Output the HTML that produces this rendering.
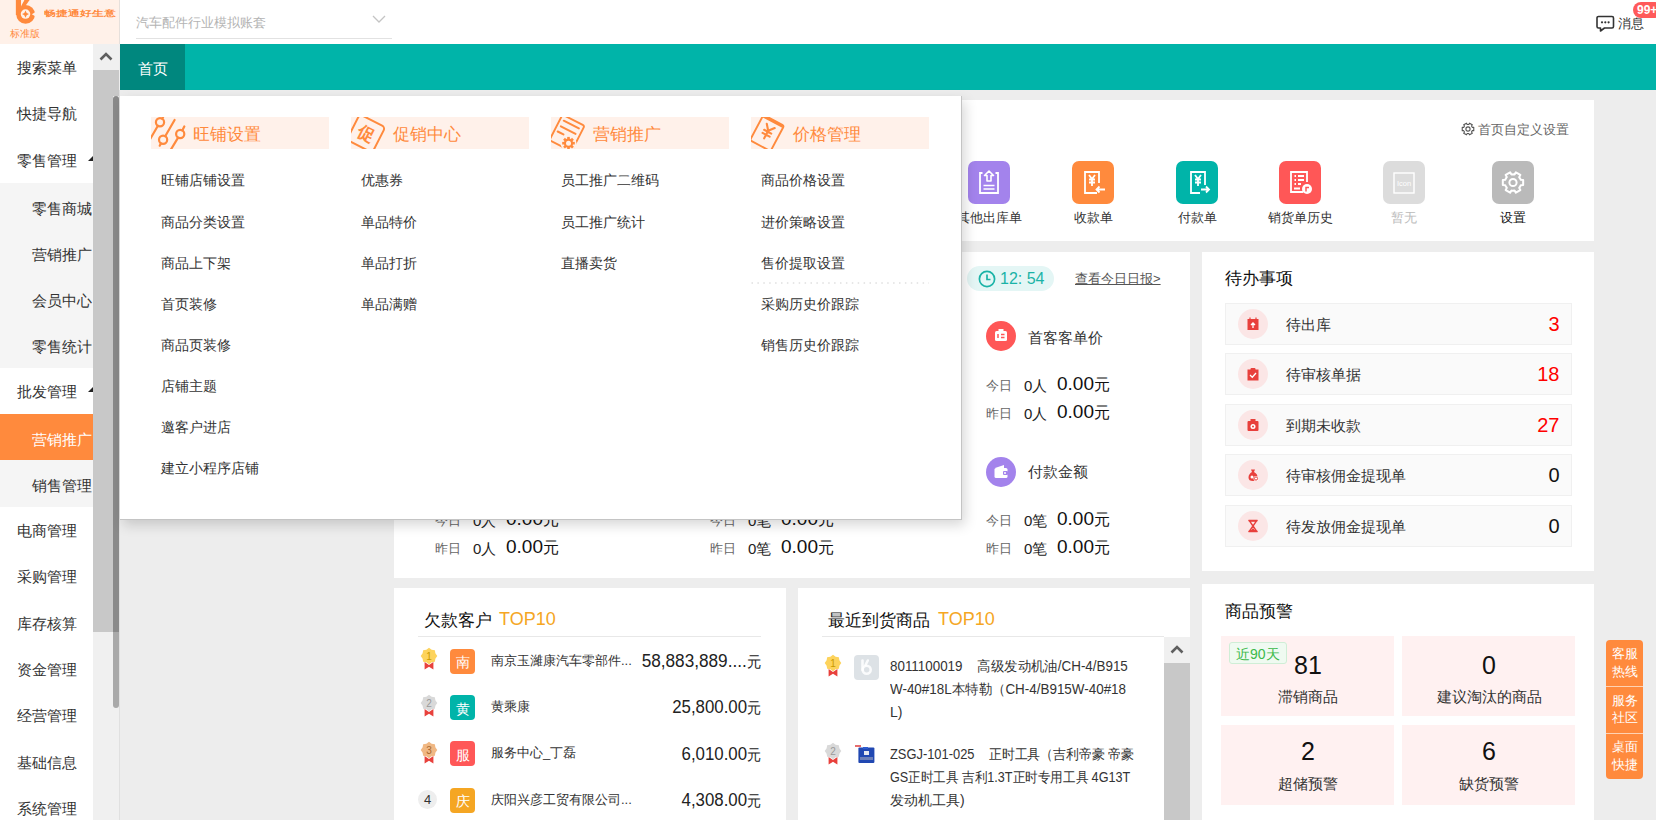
<!DOCTYPE html><html><head><meta charset="utf-8"><style>
*{box-sizing:border-box;margin:0;padding:0}
html,body{width:1656px;height:820px;overflow:hidden;background:#ededed;font-family:"Liberation Sans",sans-serif;color:#333}
.a{position:absolute;white-space:nowrap}
.card{position:absolute;background:#fff}
</style></head><body>
<div class="a" style="left:0px;top:0px;width:119px;height:44px;background:#fff1e9;"></div>
<div class="a" style="left:119px;top:0px;width:1px;height:44px;background:#e6e0dc;"></div>
<div class="a" style="left:120px;top:0px;width:1536px;height:44px;background:#fff;"></div>
<svg class="a" style="left:10px;top:0px" width="30" height="26" viewBox="0 0 30 26">
<rect x="5.85" y="0" width="5.2" height="15" fill="#ff8a3d"/>
<circle cx="15.6" cy="14.3" r="9.4" fill="#ff8a3d"/>
<path d="M14.3 0 H19.6 L15 6.5 L11 6.5Z" fill="#ff8a3d"/>
<path d="M11.05 0 H14.3 L11.05 4.8Z" fill="#fff1e9"/>
<circle cx="15.5" cy="14.1" r="4.75" fill="#fff1e9"/>
<path d="M25.2 12.3 L21.8 14.3 L25.2 16.3Z" fill="#fff1e9"/>
<path d="M15.5 10.4 Q16.1 13.5 19 14.1 Q16.1 14.7 15.5 17.8 Q14.9 14.7 12 14.1 Q14.9 13.5 15.5 10.4Z" fill="#ff8a3d"/>
</svg>
<div class="a" style="left:44px;top:5px;font-size:12px;line-height:16px;color:#ff8a3d;font-weight:bold;transform:scaleY(0.68);transform-origin:0 50%;">畅捷通好生意</div>
<div class="a" style="left:10px;top:28.4px;font-size:10px;line-height:12px;color:#ff8a3d;">标准版</div>
<div class="a" style="left:136px;top:13.5px;font-size:13px;line-height:18px;color:#b4b4b4;">汽车配件行业模拟账套</div>
<svg class="a" style="left:372px;top:15px" width="14" height="9" viewBox="0 0 14 9"><path d="M1 1 L7 7 L13 1" fill="none" stroke="#c4c4c4" stroke-width="1.3"/></svg>
<div class="a" style="left:136px;top:38px;width:256px;height:1px;background:#e2e2e2;"></div>
<svg class="a" style="left:1596px;top:15px" width="19" height="19" viewBox="0 0 19 19">
<path d="M2.5 1.5 H16 A1.5 1.5 0 0 1 17.5 3 V11.5 A1.5 1.5 0 0 1 16 13 H8.5 L4.5 16 V13 H2.5 A1.5 1.5 0 0 1 1 11.5 V3 A1.5 1.5 0 0 1 2.5 1.5Z" fill="none" stroke="#333" stroke-width="1.6" stroke-linejoin="round"/>
<circle cx="6" cy="7.3" r="1.1" fill="#333"/><circle cx="9.3" cy="7.3" r="1.1" fill="#333"/><circle cx="12.6" cy="7.3" r="1.1" fill="#333"/></svg>
<div class="a" style="left:1618px;top:14.5px;font-size:13px;line-height:18px;color:#333;">消息</div>
<div class="a" style="left:1633px;top:2px;width:30px;height:16px;border-radius:8px;background:#ff5a5a;color:#fff;font-size:12px;font-weight:bold;line-height:16px;padding-left:4px">99+</div>
<div class="a" style="left:120px;top:44px;width:1536px;height:46px;background:#00b4a9;"></div>
<div class="a" style="left:120px;top:44px;width:65px;height:46px;background:#00877e;"></div>
<div class="a" style="left:138px;top:59.1px;font-size:15px;line-height:20px;color:#fff;">首页</div>
<div class="a" style="left:0px;top:44px;width:93px;height:776px;background:#fff;"></div>
<div class="a" style="left:0px;top:183px;width:93px;height:185px;background:#f5f5f5;"></div>
<div class="a" style="left:0px;top:414px;width:93px;height:46px;background:#ff8a3d;"></div>
<div class="a" style="left:0px;top:460px;width:93px;height:47px;background:#f5f5f5;"></div>
<div class="a" style="left:17px;top:58.2px;font-size:15px;line-height:20px;color:#333;">搜索菜单</div>
<div class="a" style="left:17px;top:104.4px;font-size:15px;line-height:20px;color:#333;">快捷导航</div>
<div class="a" style="left:17px;top:150.8px;font-size:15px;line-height:20px;color:#333;">零售管理</div>
<svg class="a" style="left:87px;top:154.8px" width="8" height="7" viewBox="0 0 8 7"><path d="M1 6 L7 6 L7 0Z" fill="#222"/></svg>
<div class="a" style="left:32px;top:198.5px;font-size:15px;line-height:20px;color:#333;">零售商城</div>
<div class="a" style="left:32px;top:244.8px;font-size:15px;line-height:20px;color:#333;">营销推广</div>
<div class="a" style="left:32px;top:291.1px;font-size:15px;line-height:20px;color:#333;">会员中心</div>
<div class="a" style="left:32px;top:337.4px;font-size:15px;line-height:20px;color:#333;">零售统计</div>
<div class="a" style="left:17px;top:382.2px;font-size:15px;line-height:20px;color:#333;">批发管理</div>
<svg class="a" style="left:87px;top:386.2px" width="8" height="7" viewBox="0 0 8 7"><path d="M1 6 L7 6 L7 0Z" fill="#222"/></svg>
<div class="a" style="left:32px;top:430.0px;font-size:15px;line-height:20px;color:#fff;">营销推广</div>
<div class="a" style="left:32px;top:476.3px;font-size:15px;line-height:20px;color:#333;">销售管理</div>
<div class="a" style="left:17px;top:521.1px;font-size:15px;line-height:20px;color:#333;">电商管理</div>
<div class="a" style="left:17px;top:567.4px;font-size:15px;line-height:20px;color:#333;">采购管理</div>
<div class="a" style="left:17px;top:613.7px;font-size:15px;line-height:20px;color:#333;">库存核算</div>
<div class="a" style="left:17px;top:660.0px;font-size:15px;line-height:20px;color:#333;">资金管理</div>
<div class="a" style="left:17px;top:706.3px;font-size:15px;line-height:20px;color:#333;">经营管理</div>
<div class="a" style="left:17px;top:752.6px;font-size:15px;line-height:20px;color:#333;">基础信息</div>
<div class="a" style="left:17px;top:798.9px;font-size:15px;line-height:20px;color:#333;">系统管理</div>
<div class="a" style="left:93px;top:44px;width:26px;height:776px;background:#f0f0f0;"></div>
<div class="a" style="left:93px;top:70px;width:20px;height:562px;background:#c8c8c8;"></div>
<div class="a" style="left:113px;top:70px;width:6px;height:26px;background:#c8c8c8;"></div>
<svg class="a" style="left:99px;top:51px" width="14" height="10" viewBox="0 0 14 10"><path d="M1.5 8.5 L7 3 L12.5 8.5" fill="none" stroke="#5f5f5f" stroke-width="2.6"/></svg>
<div class="a" style="left:113px;top:96px;width:6px;height:612px;border-radius:3px;background:linear-gradient(#8a8a8a 0,#8a8a8a 536px,#a9a9a9 536px)"></div>
<div class="a" style="left:119px;top:90px;width:1px;height:730px;background:#e0e0e0;"></div>
<div class="a" style="left:394px;top:100px;width:1200px;height:141px;background:#fff;"></div>
<div class="a" style="left:1478px;top:121.0px;font-size:13px;line-height:18px;color:#666;">首页自定义设置</div>
<svg class="a" style="left:1460.5px;top:122px" width="14" height="14" viewBox="0 0 14 14"><path d="M11.23 5.19 L11.31 5.40 L12.77 5.37 L12.77 8.63 L11.31 8.60 L10.68 9.76 L10.54 9.94 L11.30 11.19 L8.48 12.82 L7.77 11.53 L6.45 11.57 L6.23 11.53 L5.52 12.82 L2.70 11.19 L3.46 9.94 L2.77 8.81 L2.69 8.60 L1.23 8.63 L1.23 5.37 L2.69 5.40 L3.32 4.24 L3.46 4.06 L2.70 2.81 L5.52 1.18 L6.23 2.47 L7.55 2.43 L7.77 2.47 L8.48 1.18 L11.30 2.81 L10.54 4.06Z" fill="none" stroke="#555" stroke-width="1.1" stroke-linejoin="round"/><circle cx="7" cy="7" r="2.1" fill="none" stroke="#555" stroke-width="1.1"/></svg>
<div class="a" style="left:968px;top:161px;width:42px;height:43px;border-radius:7px;background:#a383ec"></div>
<div class="a" style="left:889.0px;width:200px;text-align:center;top:209.3px;font-size:13px;line-height:18px;color:#333;">其他出库单</div>
<div class="a" style="left:1072px;top:161px;width:42px;height:43px;border-radius:7px;background:#ff8a3d"></div>
<div class="a" style="left:993.0px;width:200px;text-align:center;top:209.3px;font-size:13px;line-height:18px;color:#333;">收款单</div>
<div class="a" style="left:1176px;top:161px;width:42px;height:43px;border-radius:7px;background:#00b4a9"></div>
<div class="a" style="left:1097.0px;width:200px;text-align:center;top:209.3px;font-size:13px;line-height:18px;color:#333;">付款单</div>
<div class="a" style="left:1279px;top:161px;width:42px;height:43px;border-radius:7px;background:#ff5757"></div>
<div class="a" style="left:1200.0px;width:200px;text-align:center;top:209.3px;font-size:13px;line-height:18px;color:#333;">销货单历史</div>
<div class="a" style="left:1383px;top:161px;width:42px;height:43px;border-radius:7px;background:#dcdcdc"></div>
<div class="a" style="left:1304.0px;width:200px;text-align:center;top:209.3px;font-size:13px;line-height:18px;color:#bbb;">暂无</div>
<div class="a" style="left:1492px;top:161px;width:42px;height:43px;border-radius:7px;background:#bababa"></div>
<div class="a" style="left:1413.0px;width:200px;text-align:center;top:209.3px;font-size:13px;line-height:18px;color:#111;">设置</div>
<svg class="a" style="left:968px;top:161px" width="42" height="43" viewBox="0 0 42 43"><path d="M14.5 12 H12 V32 H30 V12 H27.5" fill="none" stroke="#fff" stroke-width="1.8"/><path d="M21 10 L16.5 14.5 H19 V20 H23 V14.5 H25.5Z" fill="none" stroke="#fff" stroke-width="1.6" stroke-linejoin="round"/><path d="M15.5 24.5 H26.5 M15.5 28 H26.5" stroke="#fff" stroke-width="1.6"/></svg>
<svg class="a" style="left:1072px;top:161px" width="42" height="43" viewBox="0 0 42 43"><path d="M27 22 V11 H13 V32 H25" fill="none" stroke="#fff" stroke-width="1.8"/><path d="M17 14 L20 18 L23 14 M17 18.5 H23 M17 21.5 H23 M20 18 V25" fill="none" stroke="#fff" stroke-width="1.8"/><path d="M33 28.5 H24.5 M27.5 25.5 L24.5 28.5 L27.5 31.5" fill="none" stroke="#fff" stroke-width="1.8"/></svg>
<svg class="a" style="left:1176px;top:161px" width="42" height="43" viewBox="0 0 42 43"><path d="M29 24 V11 H15 V32 H24" fill="none" stroke="#fff" stroke-width="1.8"/><path d="M19 14 L22 18 L25 14 M19 18.5 H25 M19 21.5 H25 M22 18 V25" fill="none" stroke="#fff" stroke-width="1.8"/><path d="M25 28.5 H33 M30 25.5 L33 28.5 L30 31.5" fill="none" stroke="#fff" stroke-width="1.8"/></svg>
<svg class="a" style="left:1279px;top:161px" width="42" height="43" viewBox="0 0 42 43"><path d="M24 31 H12 V11 H28 V21" fill="none" stroke="#fff" stroke-width="1.8"/><path d="M15.5 15 H17 M19 15 H25 M15.5 19 H17 M19 19 H25 M15.5 23 H17 M19 23 H22 M15 27.5 H21" stroke="#fff" stroke-width="1.8"/><circle cx="28" cy="28" r="5" fill="#fff"/><path d="M27 30.5 V26.5 H30" fill="none" stroke="#ff5757" stroke-width="1.5"/></svg>
<svg class="a" style="left:1383px;top:161px" width="42" height="43" viewBox="0 0 42 43"><rect x="11" y="12" width="20" height="20" fill="none" stroke="#fff" stroke-width="1.4"/><text x="21" y="25" font-size="7.5" fill="#fff" text-anchor="middle" font-family="Liberation Sans">Icon</text></svg>
<svg class="a" style="left:1492px;top:161px" width="42" height="43" viewBox="0 0 42 43"><path d="M28.54 18.28 L28.76 18.84 L31.17 18.90 L31.17 24.10 L28.76 24.16 L27.56 26.42 L27.18 26.89 L28.34 29.01 L23.84 31.61 L22.58 29.55 L20.02 29.64 L19.42 29.55 L18.16 31.61 L13.66 29.01 L14.82 26.89 L13.46 24.72 L13.24 24.16 L10.83 24.10 L10.83 18.90 L13.24 18.84 L14.44 16.58 L14.82 16.11 L13.66 13.99 L18.16 11.39 L19.42 13.45 L21.98 13.36 L22.58 13.45 L23.84 11.39 L28.34 13.99 L27.18 16.11Z" fill="none" stroke="#fff" stroke-width="2" stroke-linejoin="round"/><circle cx="21" cy="21.5" r="3.6" fill="none" stroke="#fff" stroke-width="2"/></svg>
<div class="a" style="left:394px;top:252px;width:796px;height:326px;background:#fff;"></div>
<div class="a" style="left:967px;top:266px;width:87px;height:25px;border-radius:12.5px;background:#e4f6f5"></div>
<svg class="a" style="left:978px;top:270px" width="18" height="18" viewBox="0 0 18 18"><circle cx="9" cy="9" r="7.6" fill="none" stroke="#1bb3a7" stroke-width="1.7"/><path d="M9 4.5 V9.5 H12.5" fill="none" stroke="#1bb3a7" stroke-width="1.7"/></svg>
<div class="a" style="left:1000px;top:269.1px;font-size:16px;line-height:20px;color:#1bb3a7;">12: 54</div>
<div class="a" style="left:1075px;top:270.0px;font-size:13px;line-height:18px;color:#555;text-decoration:underline">查看今日日报&gt;</div>
<div class="a" style="left:986px;top:321px;width:30px;height:30px;border-radius:15px;background:#ff5757"></div>
<svg class="a" style="left:986px;top:321px" width="30" height="30" viewBox="0 0 30 30"><rect x="9" y="10" width="12" height="10" rx="1.5" fill="#fff"/><rect x="12.5" y="8" width="5" height="3" fill="#fff"/><path d="M12 13 V17 M15 13.5 H18.5 M15 16.5 H18.5" stroke="#ff5757" stroke-width="1.5"/></svg>
<div class="a" style="left:1028px;top:327.6px;font-size:15px;line-height:20px;color:#333;">首客客单价</div>
<div class="a" style="left:986px;top:377.0px;font-size:13px;line-height:18px;color:#666;">今日</div>
<div class="a" style="left:1024px;top:376.1px;font-size:15px;line-height:20px;color:#222;">0人</div>
<div class="a" style="left:1057px;top:373.3px;font-size:19px;line-height:22px;color:#111;">0.00<span style="font-size:16px">元</span></div>
<div class="a" style="left:986px;top:405.0px;font-size:13px;line-height:18px;color:#666;">昨日</div>
<div class="a" style="left:1024px;top:404.1px;font-size:15px;line-height:20px;color:#222;">0人</div>
<div class="a" style="left:1057px;top:401.3px;font-size:19px;line-height:22px;color:#111;">0.00<span style="font-size:16px">元</span></div>
<div class="a" style="left:986px;top:457px;width:30px;height:30px;border-radius:15px;background:#a383ec"></div>
<svg class="a" style="left:986px;top:457px" width="30" height="30" viewBox="0 0 30 30"><path d="M9 11 L18 8 V11Z" fill="#fff"/><rect x="8.5" y="11" width="13" height="10" rx="1.5" fill="#fff"/><rect x="17" y="14" width="5" height="4" rx="1" fill="#a383ec"/><circle cx="19" cy="16" r="1" fill="#fff"/></svg>
<div class="a" style="left:1028px;top:462.1px;font-size:15px;line-height:20px;color:#333;">付款金额</div>
<div class="a" style="left:986px;top:511.5px;font-size:13px;line-height:18px;color:#666;">今日</div>
<div class="a" style="left:1024px;top:510.6px;font-size:15px;line-height:20px;color:#222;">0笔</div>
<div class="a" style="left:1057px;top:507.8px;font-size:19px;line-height:22px;color:#111;">0.00<span style="font-size:16px">元</span></div>
<div class="a" style="left:986px;top:539.5px;font-size:13px;line-height:18px;color:#666;">昨日</div>
<div class="a" style="left:1024px;top:538.6px;font-size:15px;line-height:20px;color:#222;">0笔</div>
<div class="a" style="left:1057px;top:535.8px;font-size:19px;line-height:22px;color:#111;">0.00<span style="font-size:16px">元</span></div>
<div class="a" style="left:435px;top:511.5px;font-size:13px;line-height:18px;color:#666;">今日</div>
<div class="a" style="left:473px;top:510.6px;font-size:15px;line-height:20px;color:#222;">0人</div>
<div class="a" style="left:506px;top:507.8px;font-size:19px;line-height:22px;color:#111;">0.00<span style="font-size:16px">元</span></div>
<div class="a" style="left:435px;top:539.5px;font-size:13px;line-height:18px;color:#666;">昨日</div>
<div class="a" style="left:473px;top:538.6px;font-size:15px;line-height:20px;color:#222;">0人</div>
<div class="a" style="left:506px;top:535.8px;font-size:19px;line-height:22px;color:#111;">0.00<span style="font-size:16px">元</span></div>
<div class="a" style="left:710px;top:511.5px;font-size:13px;line-height:18px;color:#666;">今日</div>
<div class="a" style="left:748px;top:510.6px;font-size:15px;line-height:20px;color:#222;">0笔</div>
<div class="a" style="left:781px;top:507.8px;font-size:19px;line-height:22px;color:#111;">0.00<span style="font-size:16px">元</span></div>
<div class="a" style="left:710px;top:539.5px;font-size:13px;line-height:18px;color:#666;">昨日</div>
<div class="a" style="left:748px;top:538.6px;font-size:15px;line-height:20px;color:#222;">0笔</div>
<div class="a" style="left:781px;top:535.8px;font-size:19px;line-height:22px;color:#111;">0.00<span style="font-size:16px">元</span></div>
<div class="a" style="left:1202px;top:252px;width:392px;height:319px;background:#fff;"></div>
<div class="a" style="left:1225px;top:268.2px;font-size:17px;line-height:22px;color:#111;">待办事项</div>
<div class="a" style="left:1225px;top:303px;width:347px;height:42px;background:#fafafa;border:1px solid #f0f0f0"></div>
<div class="a" style="left:1238px;top:308.5px;width:30px;height:30px;border-radius:15px;background:#fbe6e6"></div>
<div class="a" style="left:1286px;top:315.1px;font-size:15px;line-height:20px;color:#333;">待出库</div>
<div class="a" style="right:96.5px;top:311.8px;font-size:20px;line-height:24px;color:#f00;text-align:right;">3</div>
<div class="a" style="left:1225px;top:353px;width:347px;height:42px;background:#fafafa;border:1px solid #f0f0f0"></div>
<div class="a" style="left:1238px;top:358.5px;width:30px;height:30px;border-radius:15px;background:#fbe6e6"></div>
<div class="a" style="left:1286px;top:365.1px;font-size:15px;line-height:20px;color:#333;">待审核单据</div>
<div class="a" style="right:96.5px;top:361.8px;font-size:20px;line-height:24px;color:#f00;text-align:right;">18</div>
<div class="a" style="left:1225px;top:404px;width:347px;height:42px;background:#fafafa;border:1px solid #f0f0f0"></div>
<div class="a" style="left:1238px;top:409.5px;width:30px;height:30px;border-radius:15px;background:#fbe6e6"></div>
<div class="a" style="left:1286px;top:416.1px;font-size:15px;line-height:20px;color:#333;">到期未收款</div>
<div class="a" style="right:96.5px;top:412.8px;font-size:20px;line-height:24px;color:#f00;text-align:right;">27</div>
<div class="a" style="left:1225px;top:454px;width:347px;height:42px;background:#fafafa;border:1px solid #f0f0f0"></div>
<div class="a" style="left:1238px;top:459.5px;width:30px;height:30px;border-radius:15px;background:#fbe6e6"></div>
<div class="a" style="left:1286px;top:466.1px;font-size:15px;line-height:20px;color:#333;">待审核佣金提现单</div>
<div class="a" style="right:96.5px;top:462.8px;font-size:20px;line-height:24px;color:#111;text-align:right;">0</div>
<div class="a" style="left:1225px;top:505px;width:347px;height:42px;background:#fafafa;border:1px solid #f0f0f0"></div>
<div class="a" style="left:1238px;top:510.5px;width:30px;height:30px;border-radius:15px;background:#fbe6e6"></div>
<div class="a" style="left:1286px;top:517.1px;font-size:15px;line-height:20px;color:#333;">待发放佣金提现单</div>
<div class="a" style="right:96.5px;top:513.8px;font-size:20px;line-height:24px;color:#111;text-align:right;">0</div>
<svg class="a" style="left:1246px;top:316.5px" width="14" height="14" viewBox="0 0 14 14"><rect x="1.5" y="2" width="11" height="11" fill="#e8403c"/><path d="M4 0.5 V3 M10 0.5 V3" stroke="#e8403c" stroke-width="1.2"/><path d="M7 11 V6 M5 8 L7 6 L9 8" stroke="#fff" stroke-width="1.3" fill="none"/></svg>
<svg class="a" style="left:1246px;top:366.5px" width="14" height="14" viewBox="0 0 14 14"><rect x="1.5" y="2.5" width="11" height="11" fill="#e8403c"/><rect x="4.5" y="1" width="5" height="3" rx="1" fill="#e8403c"/><path d="M4 8 L6.3 10.2 L10 6" stroke="#fff" stroke-width="1.3" fill="none"/></svg>
<svg class="a" style="left:1246px;top:417.5px" width="14" height="14" viewBox="0 0 14 14"><rect x="1.5" y="3" width="11" height="10" rx="1" fill="#e8403c"/><rect x="4.5" y="1" width="5" height="3" fill="#e8403c"/><circle cx="7" cy="8.5" r="2.5" fill="#fff"/><circle cx="7" cy="8.5" r="1" fill="#e8403c"/></svg>
<svg class="a" style="left:1246px;top:467.5px" width="14" height="14" viewBox="0 0 14 14"><path d="M5 1.5 H9 L8 4 Q12 6 11.5 10 Q11 13 7 13 Q2.5 13 2.5 9.5 Q2.5 6 6 4Z" fill="#e8403c"/><circle cx="10" cy="10.5" r="2.5" fill="#fff"/><circle cx="10" cy="10.5" r="1.6" fill="none" stroke="#e8403c" stroke-width="1"/><circle cx="6" cy="9" r="1.5" fill="#fff"/></svg>
<svg class="a" style="left:1246px;top:518.5px" width="14" height="14" viewBox="0 0 14 14"><path d="M2.5 1.5 H11.5 M2.5 12.5 H11.5" stroke="#e8403c" stroke-width="1.5"/><path d="M3.5 2 H10.5 L7 7 L10.5 12 H3.5 L7 7Z" fill="none" stroke="#e8403c" stroke-width="1.4"/><path d="M4.5 12 L7 9 L9.5 12Z" fill="#e8403c"/></svg>
<div class="a" style="left:394px;top:588px;width:392px;height:240px;background:#fff;"></div>
<div class="a" style="left:424px;top:609.7px;font-size:17px;line-height:22px;color:#111;">欠款客户</div>
<div class="a" style="left:499px;top:608.2px;font-size:18px;line-height:22px;color:#f5a623;">TOP10</div>
<div class="a" style="left:418px;top:636px;width:343px;height:1px;background:#e8e8e8;"></div>
<div class="a" style="left:450px;top:648.7px;width:25px;height:25px;border-radius:4px;background:#ff8a3d"></div>
<div class="a" style="left:450.0px;width:25px;text-align:center;top:653.3px;font-size:14px;line-height:18px;color:#fff;">南</div>
<div class="a" style="left:491px;top:651.7px;font-size:13px;line-height:18px;color:#333;">南京玉濰康汽车零部件...</div>
<div class="a" style="right:895px;top:649.9px;font-size:18px;line-height:22px;color:#222;text-align:right;transform:scaleX(0.955);transform-origin:100% 50%">58,883,889....<span style="font-size:15px">元</span></div>
<div class="a" style="left:450px;top:695.0px;width:25px;height:25px;border-radius:4px;background:#00b4a9"></div>
<div class="a" style="left:450.0px;width:25px;text-align:center;top:699.6px;font-size:14px;line-height:18px;color:#fff;">黄</div>
<div class="a" style="left:491px;top:698.0px;font-size:13px;line-height:18px;color:#333;">黄乘康</div>
<div class="a" style="right:895px;top:696.2px;font-size:18px;line-height:22px;color:#222;text-align:right;transform:scaleX(0.935);transform-origin:100% 50%">25,800.00<span style="font-size:15px">元</span></div>
<div class="a" style="left:450px;top:741.3px;width:25px;height:25px;border-radius:4px;background:#ff5757"></div>
<div class="a" style="left:450.0px;width:25px;text-align:center;top:745.9px;font-size:14px;line-height:18px;color:#fff;">服</div>
<div class="a" style="left:491px;top:744.3px;font-size:13px;line-height:18px;color:#333;">服务中心_丁磊</div>
<div class="a" style="right:895px;top:742.5px;font-size:18px;line-height:22px;color:#222;text-align:right;transform:scaleX(0.935);transform-origin:100% 50%">6,010.00<span style="font-size:15px">元</span></div>
<div class="a" style="left:450px;top:787.6px;width:25px;height:25px;border-radius:4px;background:#f5a623"></div>
<div class="a" style="left:450.0px;width:25px;text-align:center;top:792.2px;font-size:14px;line-height:18px;color:#fff;">庆</div>
<div class="a" style="left:491px;top:790.6px;font-size:13px;line-height:18px;color:#333;">庆阳兴彦工贸有限公司...</div>
<div class="a" style="right:895px;top:788.8px;font-size:18px;line-height:22px;color:#222;text-align:right;transform:scaleX(0.935);transform-origin:100% 50%">4,308.00<span style="font-size:15px">元</span></div>
<svg class="a" style="left:414.5px;top:645px" width="28" height="26" viewBox="0 0 28 26"><path d="M9.6 17 L14 20 L18.4 17 V24.6 L14 21.8 L9.6 24.6Z" fill="#e8413c"/><polygon points="14.00,2.70 16.64,4.63 19.87,5.13 20.37,8.36 22.30,11.00 20.37,13.64 19.87,16.87 16.64,17.37 14.00,19.30 11.36,17.37 8.13,16.87 7.63,13.64 5.70,11.00 7.63,8.36 8.13,5.13 11.36,4.63" fill="#fdd35c"/><text x="14" y="14.6" font-size="10" fill="#c99a00" text-anchor="middle" font-family="Liberation Sans">1</text></svg>
<svg class="a" style="left:414.5px;top:691.8px" width="28" height="26" viewBox="0 0 28 26"><path d="M9.6 17 L14 20 L18.4 17 V24.6 L14 21.8 L9.6 24.6Z" fill="#e8413c"/><polygon points="14.00,2.70 16.64,4.63 19.87,5.13 20.37,8.36 22.30,11.00 20.37,13.64 19.87,16.87 16.64,17.37 14.00,19.30 11.36,17.37 8.13,16.87 7.63,13.64 5.70,11.00 7.63,8.36 8.13,5.13 11.36,4.63" fill="#d9d9d9"/><text x="14" y="14.6" font-size="10" fill="#9a9a9a" text-anchor="middle" font-family="Liberation Sans">2</text></svg>
<svg class="a" style="left:414.5px;top:738.8px" width="28" height="26" viewBox="0 0 28 26"><path d="M9.6 17 L14 20 L18.4 17 V24.6 L14 21.8 L9.6 24.6Z" fill="#e8413c"/><polygon points="14.00,2.70 16.64,4.63 19.87,5.13 20.37,8.36 22.30,11.00 20.37,13.64 19.87,16.87 16.64,17.37 14.00,19.30 11.36,17.37 8.13,16.87 7.63,13.64 5.70,11.00 7.63,8.36 8.13,5.13 11.36,4.63" fill="#f0b884"/><text x="14" y="14.6" font-size="10" fill="#a8672e" text-anchor="middle" font-family="Liberation Sans">3</text></svg>
<div class="a" style="left:418px;top:790px;width:19px;height:19px;border-radius:10px;background:#eeeeee"></div>
<div class="a" style="left:418.0px;width:19px;text-align:center;top:792.0px;font-size:13px;line-height:16px;color:#333;">4</div>
<div class="a" style="left:798px;top:588px;width:392px;height:240px;background:#fff;"></div>
<div class="a" style="left:828px;top:609.7px;font-size:17px;line-height:22px;color:#111;">最近到货商品</div>
<div class="a" style="left:938px;top:608.2px;font-size:18px;line-height:22px;color:#f5a623;">TOP10</div>
<div class="a" style="left:822px;top:636px;width:342px;height:1px;background:#e8e8e8;"></div>
<div class="a" style="left:1164px;top:637px;width:26px;height:200px;background:#c8c8c8;"></div>
<div class="a" style="left:1164px;top:637px;width:26px;height:26px;background:#f0f0f0;"></div>
<svg class="a" style="left:1170px;top:644px" width="14" height="10" viewBox="0 0 14 10"><path d="M1.5 8.5 L7 3 L12.5 8.5" fill="none" stroke="#5f5f5f" stroke-width="2.6"/></svg>
<div class="a" style="left:854px;top:655px;width:25px;height:25px;border-radius:4px;background:#dde2e6"></div>
<svg class="a" style="left:854px;top:655px" width="25" height="25" viewBox="0 0 25 25"><g fill="none" stroke="#fff" stroke-opacity="0.85" stroke-width="2.6" stroke-linecap="round"><path d="M8.5 5.5 V15"/><circle cx="12.7" cy="14.8" r="4"/><path d="M13.8 5.5 L11.5 10"/></g></svg>
<svg class="a" style="left:854px;top:743px" width="25" height="25" viewBox="0 0 25 25"><rect x="1" y="2" width="6" height="2" fill="#e04848" opacity="0.8"/><rect x="4.4" y="4.5" width="16" height="15.5" rx="1" fill="#2148b2"/><rect x="9" y="4" width="5" height="2" fill="#2d5bd0"/><rect x="10" y="8" width="5" height="4" fill="#e6e8f0"/><rect x="6" y="14" width="13" height="3" fill="#6c7fb8"/></svg>
<svg class="a" style="left:818.7px;top:652px" width="28" height="26" viewBox="0 0 28 26"><path d="M9.6 17 L14 20 L18.4 17 V24.6 L14 21.8 L9.6 24.6Z" fill="#e8413c"/><polygon points="14.00,2.70 16.64,4.63 19.87,5.13 20.37,8.36 22.30,11.00 20.37,13.64 19.87,16.87 16.64,17.37 14.00,19.30 11.36,17.37 8.13,16.87 7.63,13.64 5.70,11.00 7.63,8.36 8.13,5.13 11.36,4.63" fill="#fdd35c"/><text x="14" y="14.6" font-size="10" fill="#c99a00" text-anchor="middle" font-family="Liberation Sans">1</text></svg>
<svg class="a" style="left:818.7px;top:739.8px" width="28" height="26" viewBox="0 0 28 26"><path d="M9.6 17 L14 20 L18.4 17 V24.6 L14 21.8 L9.6 24.6Z" fill="#e8413c"/><polygon points="14.00,2.70 16.64,4.63 19.87,5.13 20.37,8.36 22.30,11.00 20.37,13.64 19.87,16.87 16.64,17.37 14.00,19.30 11.36,17.37 8.13,16.87 7.63,13.64 5.70,11.00 7.63,8.36 8.13,5.13 11.36,4.63" fill="#d9d9d9"/><text x="14" y="14.6" font-size="10" fill="#9a9a9a" text-anchor="middle" font-family="Liberation Sans">2</text></svg>
<div class="a" style="left:890px;top:656.6px;font-size:14px;line-height:18px;color:#333;transform:scaleX(0.957);transform-origin:0 50%">8011100019&nbsp;&nbsp;&nbsp;&nbsp;高级发动机油/CH-4/B915</div>
<div class="a" style="left:890px;top:679.6px;font-size:14px;line-height:18px;color:#333;transform:scaleX(0.959);transform-origin:0 50%">W-40#18L本特勒（CH-4/B915W-40#18</div>
<div class="a" style="left:890px;top:702.6px;font-size:14px;line-height:18px;color:#333;">L)</div>
<div class="a" style="left:890px;top:745.1px;font-size:14px;line-height:18px;color:#333;transform:scaleX(0.92);transform-origin:0 50%">ZSGJ-101-025&nbsp;&nbsp;&nbsp;&nbsp;正时工具（吉利帝豪 帝豪</div>
<div class="a" style="left:890px;top:768.1px;font-size:14px;line-height:18px;color:#333;transform:scaleX(0.90);transform-origin:0 50%">GS正时工具 吉利1.3T正时专用工具 4G13T</div>
<div class="a" style="left:890px;top:791.1px;font-size:14px;line-height:18px;color:#333;">发动机工具)</div>
<div class="a" style="left:1202px;top:584px;width:392px;height:240px;background:#fff;"></div>
<div class="a" style="left:1225px;top:601.2px;font-size:17px;line-height:22px;color:#111;">商品预警</div>
<div class="a" style="left:1221px;top:636px;width:173px;height:80px;background:#fff1f1;"></div>
<div class="a" style="left:1208.0px;width:200px;text-align:center;top:650.0px;font-size:25px;line-height:30px;color:#111;">81</div>
<div class="a" style="left:1208.0px;width:200px;text-align:center;top:686.6px;font-size:15px;line-height:20px;color:#333;">滞销商品</div>
<div class="a" style="left:1402px;top:636px;width:173px;height:80px;background:#fff1f1;"></div>
<div class="a" style="left:1389.0px;width:200px;text-align:center;top:650.0px;font-size:25px;line-height:30px;color:#111;">0</div>
<div class="a" style="left:1389.0px;width:200px;text-align:center;top:686.6px;font-size:15px;line-height:20px;color:#333;">建议淘汰的商品</div>
<div class="a" style="left:1221px;top:725px;width:173px;height:80px;background:#fff1f1;"></div>
<div class="a" style="left:1208.0px;width:200px;text-align:center;top:735.5px;font-size:25px;line-height:30px;color:#111;">2</div>
<div class="a" style="left:1208.0px;width:200px;text-align:center;top:773.6px;font-size:15px;line-height:20px;color:#333;">超储预警</div>
<div class="a" style="left:1402px;top:725px;width:173px;height:80px;background:#fff1f1;"></div>
<div class="a" style="left:1389.0px;width:200px;text-align:center;top:735.5px;font-size:25px;line-height:30px;color:#111;">6</div>
<div class="a" style="left:1389.0px;width:200px;text-align:center;top:773.6px;font-size:15px;line-height:20px;color:#333;">缺货预警</div>
<div class="a" style="left:1229px;top:642px;width:58px;height:22px;border-radius:3px;background:#effaf1;border:1px solid #cfeed6"></div>
<div class="a" style="left:1236px;top:644.6px;font-size:14px;line-height:18px;color:#3cb94a;">近90天</div>
<div class="a" style="left:1606px;top:640px;width:37px;height:139px;border-radius:4px;background:#ff8a3d"></div>
<div class="a" style="left:1606px;top:686px;width:37px;height:1px;background:#ffd2b3;"></div>
<div class="a" style="left:1606px;top:733px;width:37px;height:1px;background:#ffd2b3;"></div>
<div class="a" style="left:1606.0px;width:37px;text-align:center;top:646.0px;font-size:13px;line-height:16px;color:#fff;">客服</div>
<div class="a" style="left:1606.0px;width:37px;text-align:center;top:663.5px;font-size:13px;line-height:16px;color:#fff;">热线</div>
<div class="a" style="left:1606.0px;width:37px;text-align:center;top:692.5px;font-size:13px;line-height:16px;color:#fff;">服务</div>
<div class="a" style="left:1606.0px;width:37px;text-align:center;top:710.0px;font-size:13px;line-height:16px;color:#fff;">社区</div>
<div class="a" style="left:1606.0px;width:37px;text-align:center;top:739.0px;font-size:13px;line-height:16px;color:#fff;">桌面</div>
<div class="a" style="left:1606.0px;width:37px;text-align:center;top:756.5px;font-size:13px;line-height:16px;color:#fff;">快捷</div>
<div class="a" style="left:120px;top:96px;width:842px;height:424px;background:#fff;border-right:1px solid #c4c4c4;border-bottom:1px solid #c4c4c4;box-shadow:3px 5px 12px rgba(0,0,0,.16)"></div>
<div class="a" style="left:151px;top:117px;width:178px;height:32px;background:#fff1ea;"></div>
<div class="a" style="left:193px;top:124.2px;font-size:17px;line-height:22px;color:#ff8a3d;">旺铺设置</div>
<div class="a" style="left:351px;top:117px;width:178px;height:32px;background:#fff1ea;"></div>
<div class="a" style="left:393px;top:124.2px;font-size:17px;line-height:22px;color:#ff8a3d;">促销中心</div>
<div class="a" style="left:551px;top:117px;width:178px;height:32px;background:#fff1ea;"></div>
<div class="a" style="left:593px;top:124.2px;font-size:17px;line-height:22px;color:#ff8a3d;">营销推广</div>
<div class="a" style="left:751px;top:117px;width:178px;height:32px;background:#fff1ea;"></div>
<div class="a" style="left:793px;top:124.2px;font-size:17px;line-height:22px;color:#ff8a3d;">价格管理</div>
<div class="a" style="left:161px;top:171.4px;font-size:14px;line-height:18px;color:#333;">旺铺店铺设置</div>
<div class="a" style="left:161px;top:212.5px;font-size:14px;line-height:18px;color:#333;">商品分类设置</div>
<div class="a" style="left:161px;top:253.6px;font-size:14px;line-height:18px;color:#333;">商品上下架</div>
<div class="a" style="left:161px;top:294.7px;font-size:14px;line-height:18px;color:#333;">首页装修</div>
<div class="a" style="left:161px;top:335.8px;font-size:14px;line-height:18px;color:#333;">商品页装修</div>
<div class="a" style="left:161px;top:376.9px;font-size:14px;line-height:18px;color:#333;">店铺主题</div>
<div class="a" style="left:161px;top:418.0px;font-size:14px;line-height:18px;color:#333;">邀客户进店</div>
<div class="a" style="left:161px;top:459.1px;font-size:14px;line-height:18px;color:#333;">建立小程序店铺</div>
<div class="a" style="left:361px;top:171.4px;font-size:14px;line-height:18px;color:#333;">优惠券</div>
<div class="a" style="left:361px;top:212.5px;font-size:14px;line-height:18px;color:#333;">单品特价</div>
<div class="a" style="left:361px;top:253.6px;font-size:14px;line-height:18px;color:#333;">单品打折</div>
<div class="a" style="left:361px;top:294.7px;font-size:14px;line-height:18px;color:#333;">单品满赠</div>
<div class="a" style="left:561px;top:171.4px;font-size:14px;line-height:18px;color:#333;">员工推广二维码</div>
<div class="a" style="left:561px;top:212.5px;font-size:14px;line-height:18px;color:#333;">员工推广统计</div>
<div class="a" style="left:561px;top:253.6px;font-size:14px;line-height:18px;color:#333;">直播卖货</div>
<div class="a" style="left:761px;top:171.4px;font-size:14px;line-height:18px;color:#333;">商品价格设置</div>
<div class="a" style="left:761px;top:212.5px;font-size:14px;line-height:18px;color:#333;">进价策略设置</div>
<div class="a" style="left:761px;top:253.6px;font-size:14px;line-height:18px;color:#333;">售价提取设置</div>
<svg class="a" style="left:751px;top:282px" width="178" height="2" viewBox="0 0 178 2"><path d="M0.5 1 H178" stroke="#cfcfcf" stroke-width="1" stroke-dasharray="1.5 4.4"/></svg>
<div class="a" style="left:761px;top:295.4px;font-size:14px;line-height:18px;color:#333;">采购历史价跟踪</div>
<div class="a" style="left:761px;top:336.4px;font-size:14px;line-height:18px;color:#333;">销售历史价跟踪</div>
<svg class="a" style="left:151px;top:117px" width="36" height="32" viewBox="0 0 36 32"><g fill="none" stroke="#ff8a3d" stroke-width="2.2" stroke-linecap="round"><circle cx="9" cy="5.2" r="4.1"/><path d="M6.9 8.8 L-6 31 M11.1 1.6 L13 -1.5"/><circle cx="12.1" cy="22.8" r="4.1"/><path d="M14.2 19.2 L23.6 3 M10 26.4 L8.7 28.7"/><circle cx="29.2" cy="17" r="4.1"/><path d="M31.3 13.4 L33.3 9.4 M27.1 20.6 L19 34"/></g></svg>
<svg class="a" style="left:351px;top:117px" width="36" height="32" viewBox="0 0 36 32"><g transform="rotate(27 15 16.5)"><rect x="0.7" y="2.2" width="28.6" height="28.6" rx="3.5" fill="none" stroke="#ff8a3d" stroke-width="2"/><text x="15.5" y="22.5" font-size="17" font-weight="bold" fill="#ff8a3d" text-anchor="middle">促</text></g></svg>
<svg class="a" style="left:551px;top:117px" width="36" height="32" viewBox="0 0 36 32"><g transform="rotate(27 16 16)"><rect x="3.65" y="1.65" width="24.7" height="28.7" rx="2" fill="none" stroke="#ff8a3d" stroke-width="1.9"/><path d="M7.5 6.5 H24.5 M7.5 12.9 H24 M7 18.9 H13.5" stroke="#ff8a3d" stroke-width="2" stroke-linecap="round"/></g><circle cx="17.5" cy="26.2" r="8" fill="#fff1ea"/><g transform="translate(17.5 26.2)" fill="#ff8a3d"><circle r="4.6"/><rect x="-1.3" y="-6.3" width="2.6" height="12.6"/><rect x="-1.3" y="-6.3" width="2.6" height="12.6" transform="rotate(45)"/><rect x="-1.3" y="-6.3" width="2.6" height="12.6" transform="rotate(90)"/><rect x="-1.3" y="-6.3" width="2.6" height="12.6" transform="rotate(135)"/><circle r="2.5" fill="#fff1ea"/></g></svg>
<svg class="a" style="left:751px;top:117px" width="36" height="32" viewBox="0 0 36 32"><g transform="rotate(28 16 16)"><rect x="4.35" y="1.6" width="23.3" height="28.8" rx="2" fill="none" stroke="#ff8a3d" stroke-width="1.9"/><path d="M5 2.8 H27" stroke="#ff8a3d" stroke-width="3"/><path d="M11.5 8 L16 13.5 L20.5 8 M12 14.5 H20 M12 18 H20 M16 13.5 V22" fill="none" stroke="#ff8a3d" stroke-width="2.1" stroke-linecap="round"/></g></svg>
</body></html>
